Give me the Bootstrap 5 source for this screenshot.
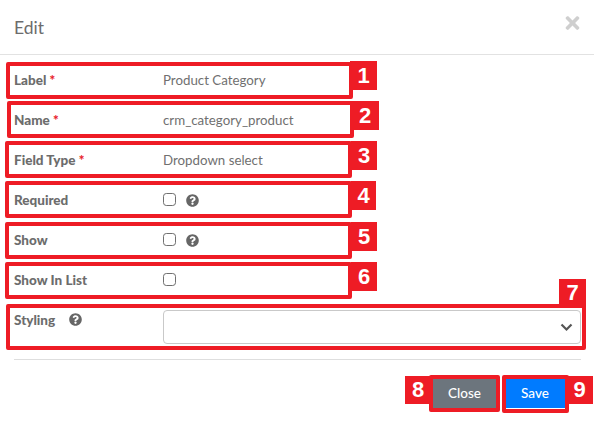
<!DOCTYPE html>
<html lang="en">
<head>
<meta charset="utf-8">
<title>Edit</title>
<link href="https://cdn.jsdelivr.net/npm/bootstrap@5.3.0/dist/css/bootstrap.min.css" rel="stylesheet">
<style>
html,body{height:438px;overflow:hidden;background:#fff}
body{font-family:Lato,"Liberation Sans",sans-serif;font-size:13.3px;color:#707070;position:relative}
.dlg-head{height:55px;padding:0 14px;border-bottom:1px solid #e2e2e2}
.dlg-title{font-size:17.5px;color:#6c6c6c;font-weight:400;margin:0}
.dlg-x{width:15px;height:20px;fill:#cfcfcf;margin-bottom:8px}
.dlg-body{padding:5px 13px 0 14px}
.fld{height:40px}
.fld-val{padding-top:2px}
.fld-lab{width:149px;font-weight:900;font-size:13.5px;color:#6c6c6c;margin:0}
.req{color:#e8222a}
.fld-check{width:13px;height:13px;border:1px solid #6f6f6f;border-radius:3px;margin:0;margin-top:-1px}
.tip{width:13px;height:13px;fill:#666;margin-left:10px;margin-top:1px}
.tip-lab{margin-left:14px;margin-top:-2px}
.sty-row{margin-top:10px}
.sel{height:34px;width:418px;border:1px solid #c9c9c9;border-radius:4px;padding-right:7px;background:#fff}
.chev{width:13px;height:9px;stroke:#555;stroke-width:2.2;fill:none}
.dlg-rule{margin:15px 0 0;border:0;border-top:1px solid #dedede;opacity:1}
.dlg-foot{padding:19px 16px 0 0;gap:9px}
.act{font-size:13.5px;font-weight:500;height:29px;border:0;border-radius:0;padding:0;color:#fff}
.act-close{width:63px;background:#6c757d}
.act-save{width:60px;background:#007bff}
.mark-box{position:absolute;border:4px solid #ee1c25;border-radius:2px;pointer-events:none}
.mark-num{position:absolute;background:#ee1c25;color:#fff;font:700 22px/1 "Liberation Sans",sans-serif;display:flex;align-items:center;justify-content:center}
.b1{left:6px;top:62px;width:347px;height:37px}
.b2{left:7px;top:101px;width:347px;height:37px}
.b3{left:5px;top:141px;width:347px;height:37px}
.b4{left:5px;top:181px;width:347px;height:37px}
.b5{left:5px;top:222px;width:347px;height:37px}
.b6{left:5px;top:262px;width:347px;height:37px}
.b7{left:6px;top:304px;width:580px;height:46px}
.b8{left:429px;top:375px;width:71px;height:37px}
.b9{left:502px;top:375px;width:67px;height:38px}
.n1{left:350px;top:61px;width:27px;height:29px}
.n2{left:351px;top:101px;width:28px;height:29px}
.n3{left:351px;top:141px;width:26px;height:29px}
.n4{left:351px;top:181px;width:25px;height:29px}
.n5{left:351px;top:222px;width:26px;height:29px}
.n6{left:351px;top:262px;width:26px;height:29px}
.n7{left:559px;top:279px;width:27px;height:27px}
.n8{left:405px;top:376px;width:26px;height:28px}
.n9{left:566px;top:376px;width:27px;height:28px}
</style>
</head>
<body>
<svg class="d-none"><defs>
<symbol id="q" viewBox="0 0 512 512"><path d="M504 256c0 136.997-111.043 248-248 248S8 392.997 8 256C8 119.083 119.043 8 256 8s248 111.083 248 248zM262.655 90c-54.497 0-89.255 22.957-116.549 63.758-3.536 5.286-2.353 12.415 2.715 16.258l34.699 26.31c5.205 3.947 12.621 3.008 16.665-2.122 17.864-22.658 30.113-35.797 57.303-35.797 20.429 0 45.698 13.148 45.698 32.958 0 14.976-12.363 22.667-32.534 33.976C247.128 238.528 216 254.941 216 296v4c0 6.627 5.373 12 12 12h56c6.627 0 12-5.373 12-12v-1.333c0-28.462 83.186-29.647 83.186-106.667 0-58.002-60.165-102-116.531-102zM256 338c-25.365 0-46 20.635-46 46 0 25.364 20.635 46 46 46s46-20.636 46-46c0-25.365-20.635-46-46-46z"/></symbol>
</defs></svg>

<div class="dlg-head d-flex align-items-center justify-content-between">
  <h5 class="dlg-title">Edit</h5>
  <svg class="dlg-x" viewBox="0 0 352 512"><path d="M242.72 256l100.07-100.07c12.28-12.28 12.28-32.19 0-44.48l-22.24-22.24c-12.28-12.28-32.19-12.28-44.48 0L176 189.28 75.93 89.21c-12.28-12.28-32.19-12.28-44.48 0L9.21 111.45c-12.28 12.28-12.28 32.19 0 44.48L109.28 256 9.21 356.07c-12.28 12.28-12.28 32.19 0 44.48l22.24 22.24c12.28 12.28 32.2 12.28 44.48 0L176 322.72l100.07 100.07c12.28 12.28 32.2 12.28 44.48 0l22.24-22.24c12.28-12.28 12.28-32.19 0-44.48L242.72 256z"/></svg>
</div>

<div class="dlg-body">
  <div class="fld d-flex align-items-center"><label class="fld-lab">Label <span class="req">*</span></label><span class="fld-val">Product Category</span></div>
  <div class="fld d-flex align-items-center"><label class="fld-lab">Name <span class="req">*</span></label><span class="fld-val">crm_category_product</span></div>
  <div class="fld d-flex align-items-center"><label class="fld-lab">Field Type <span class="req">*</span></label><span class="fld-val">Dropdown select</span></div>
  <div class="fld d-flex align-items-center"><label class="fld-lab">Required</label><input class="form-check-input fld-check" type="checkbox" aria-label="Required"><svg class="tip"><use href="#q"/></svg></div>
  <div class="fld d-flex align-items-center"><label class="fld-lab">Show</label><input class="form-check-input fld-check" type="checkbox" aria-label="Show"><svg class="tip"><use href="#q"/></svg></div>
  <div class="fld d-flex align-items-center"><label class="fld-lab">Show In List</label><input class="form-check-input fld-check" type="checkbox" aria-label="Show In List"></div>
  <div class="sty-row d-flex align-items-start">
    <label class="fld-lab d-flex align-items-center">Styling<svg class="tip tip-lab"><use href="#q"/></svg></label>
    <div class="sel d-flex align-items-center justify-content-end"><svg class="chev" viewBox="0 0 13 9"><path d="M1.5 1.5 6.5 6.5 11.5 1.5"/></svg></div>
  </div>
  <hr class="dlg-rule">
  <div class="dlg-foot d-flex justify-content-end">
    <button type="button" class="btn act act-close">Close</button>
    <button type="button" class="btn act act-save">Save</button>
  </div>
</div>

<div class="mark-box b1"></div><div class="mark-num n1">1</div>
<div class="mark-box b2"></div><div class="mark-num n2">2</div>
<div class="mark-box b3"></div><div class="mark-num n3">3</div>
<div class="mark-box b4"></div><div class="mark-num n4">4</div>
<div class="mark-box b5"></div><div class="mark-num n5">5</div>
<div class="mark-box b6"></div><div class="mark-num n6">6</div>
<div class="mark-box b7"></div><div class="mark-num n7">7</div>
<div class="mark-box b8"></div><div class="mark-num n8">8</div>
<div class="mark-box b9"></div><div class="mark-num n9">9</div>
<script src="https://cdn.jsdelivr.net/npm/bootstrap@5.3.0/dist/js/bootstrap.bundle.min.js"></script>
</body>
</html>
